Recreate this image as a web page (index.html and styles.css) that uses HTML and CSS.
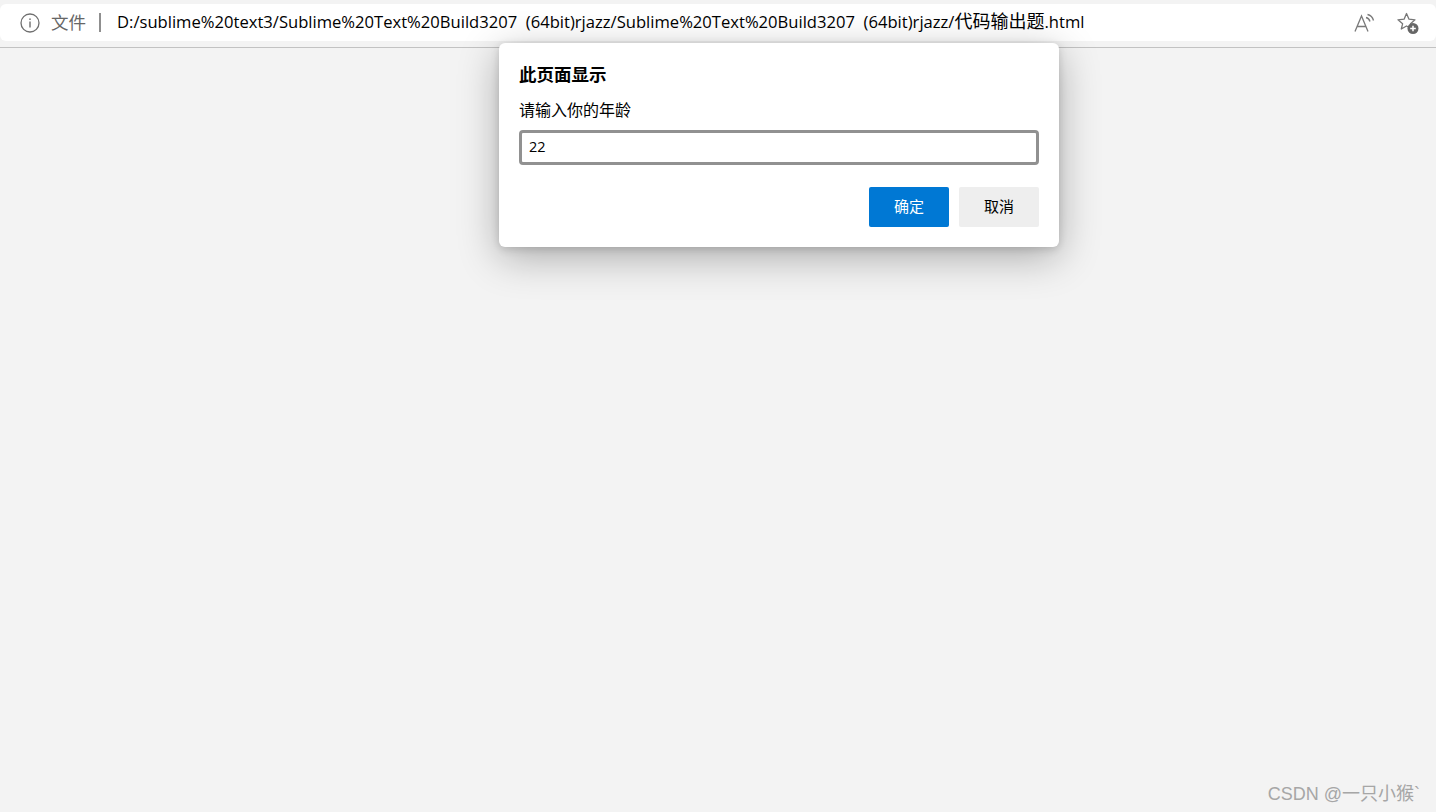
FILE: index.html
```html
<!DOCTYPE html>
<html lang="zh-CN">
<head>
    <meta charset="UTF-8">
    <title>代码输出题</title>
    <link rel="stylesheet" href="styles.css">
</head>
<body>
    <header class="toolbar">
        <div class="address-bar">
            <svg class="info-icon" width="20" height="20" viewBox="0 0 20 20">
                <circle cx="10" cy="10" r="9" fill="none" stroke="#6f6f6f" stroke-width="1.3"/>
                <rect x="9.3" y="8.5" width="1.4" height="6" fill="#6f6f6f"/>
                <rect x="9.3" y="5.4" width="1.4" height="1.6" fill="#6f6f6f"/>
            </svg>
            <span class="scheme">文件</span>
            <span class="divider"></span>
            <span class="url">D:/sublime%20text3/Sublime%20Text%20Build3207  (64bit)rjazz/Sublime%20Text%20Build3207  (64bit)rjazz/<span class="url-cjk">代码输出题</span>.html</span>
            <div class="bar-actions">
                <svg width="22" height="20" viewBox="0 0 22 20" fill="none" stroke="#7a7a7a" stroke-width="1.300">
                    <path d="M1 18.500 7.500 3 14 18.500M3.200 13.500h8.600"/>
                    <path d="M12 4.500c2 .4 3.400 1.800 4 4M13.500 1.500c3 .6 5.200 2.800 6 6"/>
                </svg>
                <svg width="24" height="24" viewBox="0 0 24 24">
                    <path d="M10.500 2.500 13 8.200l6 .6-4.500 4 1.200 5.200-5.200-3-5.200 3 1.300-5.200-4.600-4 6.100-.6z" fill="none" stroke="#777" stroke-width="1.300" stroke-linejoin="round"/>
                    <circle cx="17" cy="17.500" r="5.500" fill="#666"/>
                    <path d="M17 14.700v5.600M14.200 17.500h5.600" stroke="#fff" stroke-width="1.500"/>
                </svg>
            </div>
        </div>
    </header>

    <div class="dialog">
        <h1 class="dialog-title">此页面显示</h1>
        <p class="dialog-text">请输入你的年龄</p>
        <input class="dialog-input" type="text" value="22">
        <div class="dialog-buttons">
            <button class="btn btn-primary">确定</button>
            <button class="btn">取消</button>
        </div>
    </div>

    <div class="watermark">CSDN @一只小猴`</div>
</body>
</html>
```

FILE: styles.css
```css
html, body {
    height: 100%;
}
body {
    margin: 0;
    background-color: #f3f3f3;
    font-family: "Open Sans", "Noto Sans CJK SC", sans-serif;
    color: #000;
    overflow: hidden;
}
.toolbar {
    height: 43px;
    padding-top: 4px;
    border-bottom: 1px solid #c2c2c2;
}
.address-bar {
    height: 37px;
    background: white;
    border-radius: 6px;
    display: flex;
    align-items: center;
    padding: 0 16px 0 20px;
}
.info-icon {
    flex: none;
}
.scheme {
    margin: -2px 0 0 11px;
    font-size: 17.5px;
    line-height: 24px;
    color: #666;
}
.divider {
    width: 2px;
    height: 19px;
    margin: 0 16px 0 13px;
    background-color: #8f8f8f;
}
.url {
    margin-top: -2px;
    font-size: 16.6px;
    line-height: 24px;
    white-space: pre;
    flex: 1;
}
.url-cjk {
    font-size: 18px;
}
.bar-actions {
    display: flex;
    align-items: center;
    gap: 20px;
}
.dialog {
    position: absolute;
    left: 499px;
    top: 43px;
    width: 560px;
    height: 204px;
    box-sizing: border-box;
    padding: 19px 20px 20px;
    background: white;
    border-radius: 6px;
    box-shadow: 0 10px 40px rgba(0,0,0,0.3), 0 2px 8px rgba(0,0,0,0.15);
}
.dialog-title {
    margin: 0;
    font-size: 17.5px;
    line-height: 24px;
    font-weight: bold;
}
.dialog-text {
    margin: 13px 0 0;
    font-size: 16px;
    line-height: 22px;
}
.dialog-input {
    display: block;
    width: 100%;
    height: 35px;
    margin-top: 9px;
    padding: 0 7px 2px;
    box-sizing: border-box;
    border: 3px solid #919191;
    border-radius: 4px;
    font-family: inherit;
    font-size: 14.5px;
    outline: none;
}
.dialog-buttons {
    display: flex;
    justify-content: flex-end;
    gap: 10px;
    margin-top: 22px;
}
.btn {
    width: 80px;
    height: 40px;
    padding: 0 0 4px;
    border: none;
    border-radius: 2px;
    background-color: #eeeeee;
    color: #000;
    font-family: inherit;
    font-size: 15px;
}
.btn-primary {
    background-color: #0078d4;
    color: white;
}
.watermark {
    position: absolute;
    right: 16px;
    bottom: 7px;
    font-family: "Liberation Sans", "Noto Sans CJK SC", sans-serif;
    font-size: 18px;
    color: #a6a6a6;
}
```
